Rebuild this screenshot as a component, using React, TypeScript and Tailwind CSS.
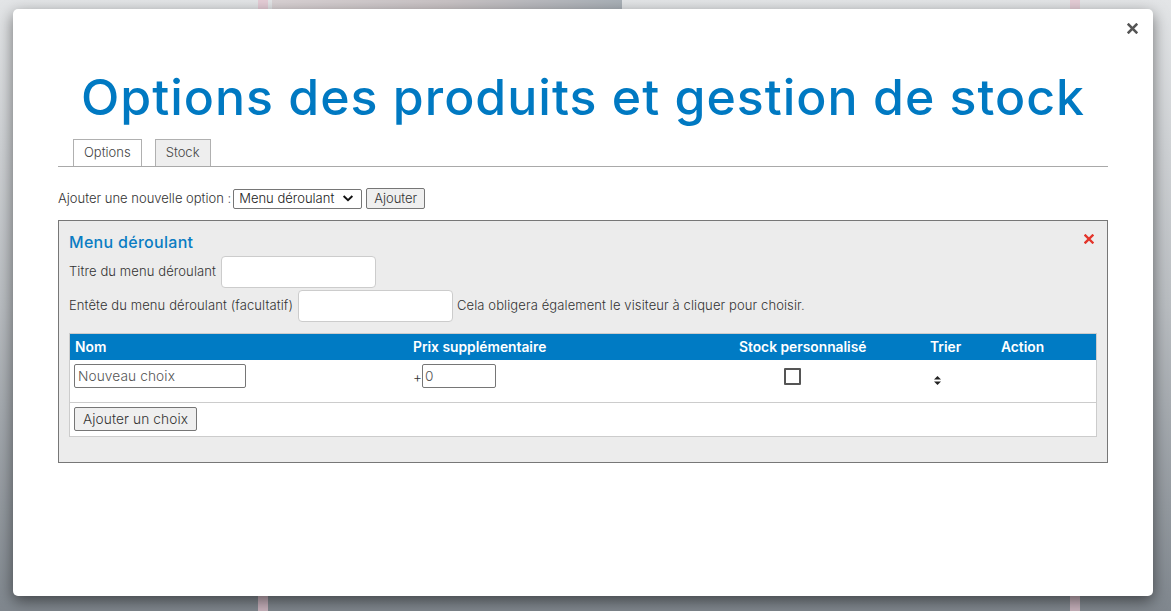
import React from 'react'

const font = { fontFamily: 'Inter, "Open Sans", Arial, sans-serif' }

function CloseIcon({ className }: { className?: string }) {
  return (
    <svg viewBox="0 0 10 10" className={className} fill="none" stroke="currentColor" strokeWidth={2.4} strokeLinecap="square">
      <path d="M1.5 1.5L8.5 8.5M8.5 1.5L1.5 8.5" />
    </svg>
  )
}

function Backdrop() {
  return (
    <div className="absolute inset-0 flex bg-gradient-to-b from-[#e3e5e7] via-[#b9bdc1] to-[#80878e]">
      <div className="w-[258px]" />
      <div className="w-[10px] bg-[#e6c3cf]/70" />
      <div className="w-[4px]" />
      <div className="h-[12px] w-[350px] bg-gradient-to-r from-[#d9d2d4] via-[#c9c3c5] to-[#a9b0b7]" />
      <div className="flex-1" />
      <div className="w-[10px] bg-[#e6c3cf]/70" />
      <div className="w-[91px]" />
    </div>
  )
}

function SortIcon() {
  return (
    <svg viewBox="0 0 7 9" className="h-[9px] w-[7px] text-[#222]" fill="currentColor">
      <path d="M3.5 0L7 3.6H0Z" />
      <path d="M0 5.4H7L3.5 9Z" />
    </svg>
  )
}

export default function App() {
  return (
    <div className="relative h-[611px] w-full overflow-hidden" style={font}>
      <Backdrop />

      {/* modal */}
      <div className="absolute left-[13px] top-[9px] h-[587px] w-[1140px] rounded-[5px] bg-white shadow-[0_5px_15px_rgba(0,0,0,0.5)]">
        <button className="absolute right-[15px] top-[14px] text-[#555]">
          <CloseIcon className="h-[11px] w-[11px]" />
        </button>

        <div className="px-[45px] pt-[58px]">
          <h1 className="text-center text-[50px] font-medium leading-[60px] tracking-[1px] text-[#0079c2]">
            Options des produits et gestion de stock
          </h1>

          {/* tabs */}
          <div className="mt-[12px] flex gap-[13px] border-b border-[#a9a9a9] pl-[15px] text-[13px] font-light text-[#444]">
            <div className="flex h-[27px] items-center border border-b-0 border-[#b0b0b0] bg-white px-[10px]">Options</div>
            <div className="flex h-[27px] items-center border border-b-0 border-[#b0b0b0] bg-[#eeeeee] px-[10px]">Stock</div>
          </div>

          <div className="mt-[21px] flex items-center text-[13px] font-light text-[#333]">
            <span>Ajouter une nouvelle option :</span>
            <div className="ml-[2px] flex h-[20px] w-[129px] items-center justify-between rounded-[2px] border border-[#767676] bg-white pl-[5px] pr-[7px] text-[13px] text-[#222]">
              <span>Menu déroulant</span>
              <svg viewBox="0 0 12 8" className="h-[7px] w-[12px]" fill="none" stroke="#111" strokeWidth={2.2}>
                <path d="M1 1.2L6 6L11 1.2" />
              </svg>
            </div>
            <button className="ml-[4px] h-[21px] w-[59px] rounded-[2px] border border-[#767676] bg-[#efefef] text-[13px] text-[#333]">
              Ajouter
            </button>
          </div>

          {/* option panel */}
          <div className="relative mt-[11px] border border-[#777] bg-[#ececec] px-[10px] pb-[25px] pt-[9px] text-[13px] font-light tracking-[0.1px] text-[#333]">
            <button className="absolute right-[13px] top-[13px] text-[#e3342a]">
              <CloseIcon className="h-[10px] w-[10px]" />
            </button>
            <h2 className="text-[16px] font-medium leading-[24px] tracking-[0.3px] text-[#0a7cc3]">Menu déroulant</h2>

            <div className="mt-[2px] flex items-center">
              <span>Titre du menu déroulant</span>
              <input className="ml-[5px] h-[32px] w-[155px] rounded-[4px] border border-[#cccccc] bg-white" />
            </div>
            <div className="mt-[2px] flex items-center">
              <span>Entête du menu déroulant (facultatif)</span>
              <input className="ml-[5px] h-[32px] w-[155px] rounded-[4px] border border-[#cccccc] bg-white" />
              <span className="ml-[4px]">Cela obligera également le visiteur à cliquer pour choisir.</span>
            </div>

            {/* choices table */}
            <div className="mt-[11px] border border-[#cccccc] bg-white">
              <div className="grid h-[26px] grid-cols-[338px_326px_191px_71px_1fr] items-center bg-[#007bc4] text-[13.8px] font-semibold tracking-normal text-white">
                <div className="pl-[5px]">Nom</div>
                <div className="pl-[5px]">Prix supplémentaire</div>
                <div className="pl-[5px]">Stock personnalisé</div>
                <div className="pl-[5px]">Trier</div>
                <div className="pl-[5px]">Action</div>
              </div>
              <div className="grid h-[43px] grid-cols-[338px_326px_191px_71px_1fr] border-b border-[#cccccc] pt-[4px] text-[13.7px]">
                <div className="pl-[4px]">
                  <input
                    defaultValue="Nouveau choix"
                    className="h-[24px] w-[172px] rounded-[2px] border border-[#767676] px-[3px] font-light text-[#555]"
                  />
                </div>
                <div className="flex items-start pl-[5px]">
                  <span className="mt-[3px] font-light">+</span>
                  <input
                    defaultValue="0"
                    className="h-[24px] w-[74px] rounded-[2px] border border-[#767676] px-[2px] font-light text-[#555]"
                  />
                </div>
                <div className="pl-[50px] pt-[4px]">
                  <div className="h-[17px] w-[17px] rounded-[1px] border-2 border-[#555]" />
                </div>
                <div className="pl-[9px] pt-[12px]">
                  <SortIcon />
                </div>
                <div />
              </div>
              <div className="h-[33px] pl-[4px] pt-[4px]">
                <button className="h-[24px] w-[123px] rounded-[2px] border border-[#767676] bg-[#efefef] text-[13.7px] font-light text-[#333]">
                  Ajouter un choix
                </button>
              </div>
            </div>
          </div>
        </div>
      </div>
    </div>
  )
}
